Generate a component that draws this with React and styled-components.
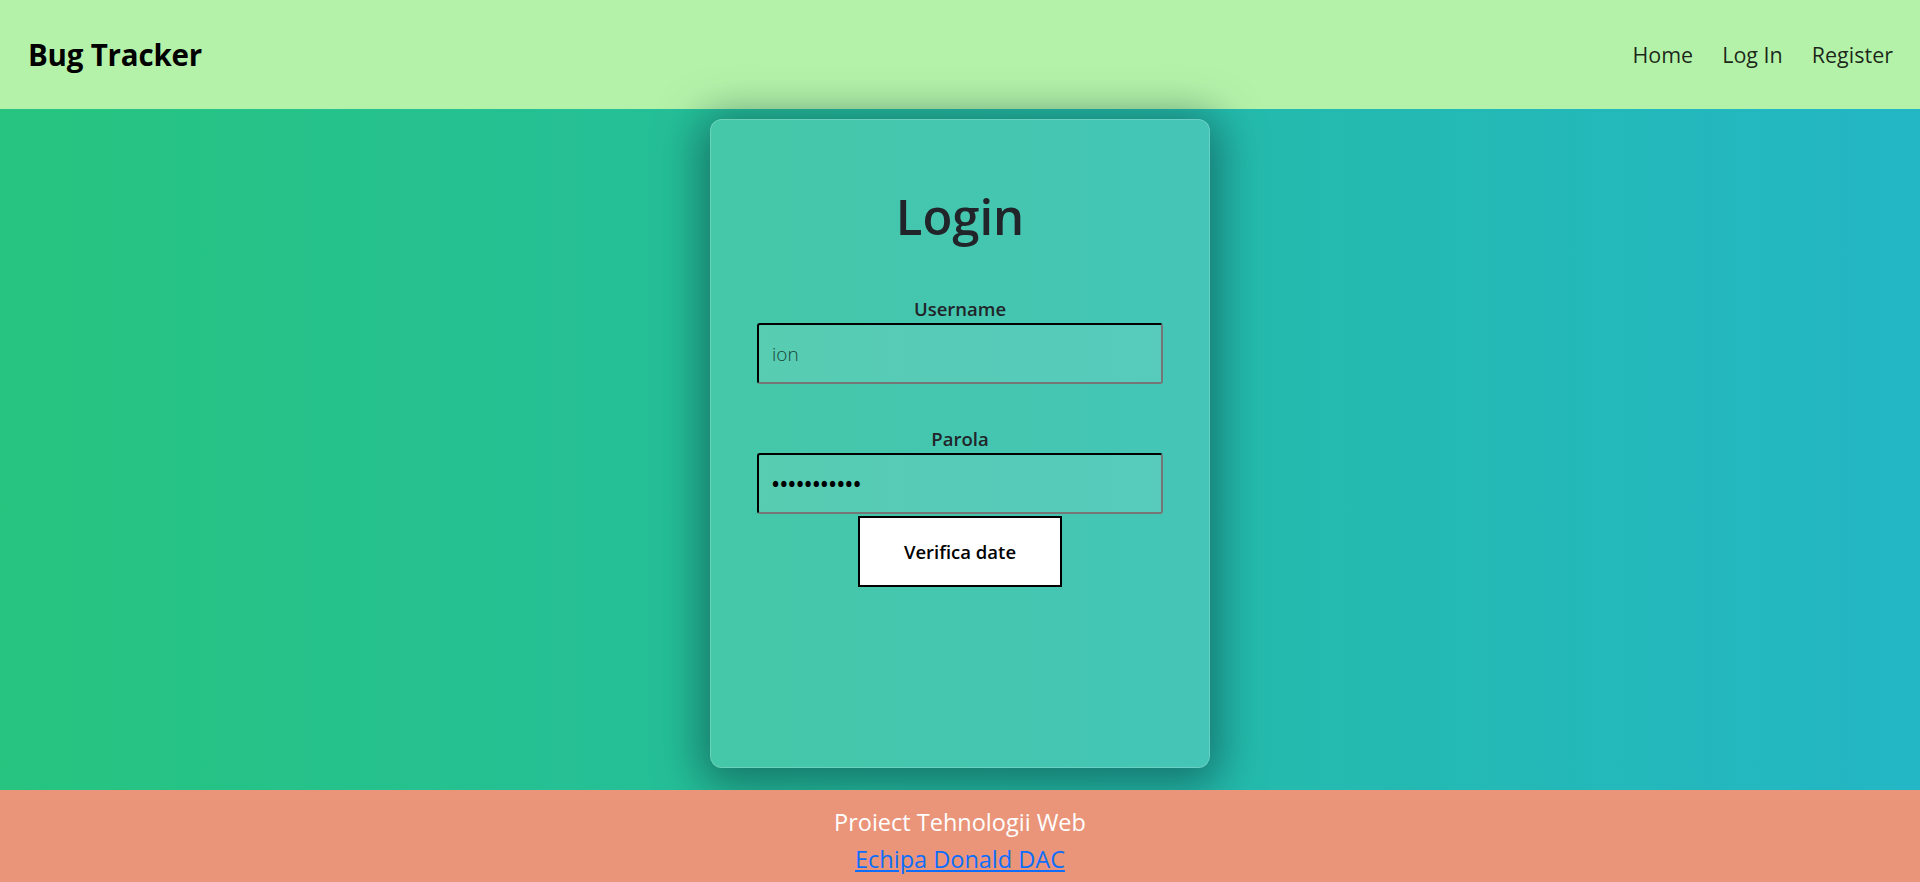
import React from "react";
import styled, { createGlobalStyle } from "styled-components";

const GlobalStyle = createGlobalStyle`
  html, body {
    margin: 0;
    padding: 0;
  }
  body {
    font-family: "Segoe UI", "Open Sans", "Noto Sans", sans-serif;
    color: #212529;
  }
  * {
    box-sizing: border-box;
  }
`;

const Page = styled.div`
  min-height: 100vh;
  display: flex;
  flex-direction: column;
`;

const Header = styled.header`
  height: 109px;
  flex-shrink: 0;
  background: #b5f2a9;
  display: flex;
  align-items: center;
  justify-content: space-between;
  padding: 0 27px 0 28px;
`;

const Brand = styled.a`
  font-size: 29.5px;
  font-weight: 700;
  color: #000;
  text-decoration: none;
  letter-spacing: -0.2px;
`;

const Nav = styled.nav`
  display: flex;
  align-items: center;
  gap: 29px;
`;

const NavLink = styled.a`
  font-size: 21.5px;
  color: rgba(0, 0, 0, 0.85);
  text-decoration: none;
  cursor: pointer;
`;

const Main = styled.main`
  flex: 1;
  display: flex;
  justify-content: center;
  padding: 10px 0 22px;
  background: linear-gradient(to right, #26c47f, #23b6c5);
`;

const Card = styled.section`
  width: 500px;
  height: 649px;
  padding-top: 66px;
  border-radius: 12px;
  border: 1px solid rgba(255, 255, 255, 0.2);
  background: rgba(255, 255, 255, 0.15);
  box-shadow: 0 8px 44px 10px rgba(12, 72, 72, 0.6);
  display: flex;
  flex-direction: column;
  align-items: center;
`;

const Title = styled.h1`
  margin: 0 0 51px;
  font-size: 49px;
  font-weight: 600;
  line-height: 60px;
  color: #212529;
`;

const Form = styled.form`
  display: flex;
  flex-direction: column;
  align-items: center;
  width: 406px;
`;

const Field = styled.div`
  display: flex;
  flex-direction: column;
  align-items: center;
  width: 100%;
  margin-bottom: ${(p) => p.$gap || 0}px;
`;

const Label = styled.label`
  font-size: 18.5px;
  font-weight: 600;
  line-height: 24px;
  margin-bottom: 2px;
  color: #212529;
`;

const Input = styled.input`
  width: 100%;
  height: 61px;
  padding: 0 13px;
  border: 2px inset #767676;
  border-top-color: #1e1e1e;
  border-left-color: #1e1e1e;
  border-radius: 3px;
  background: rgba(255, 255, 255, 0.1);
  font-family: inherit;
  font-size: 19px;
  font-weight: ${(p) => (p.type === "password" ? 700 : 300)};
  letter-spacing: ${(p) => (p.type === "password" ? "1px" : "0")};
  color: ${(p) => (p.type === "password" ? "#000" : "#173f37")};
  outline: none;
`;

const Button = styled.button`
  width: 204px;
  height: 71px;
  margin-top: 2px;
  background: #fff;
  border: 2px solid #000;
  font-family: inherit;
  font-size: 18.5px;
  font-weight: 600;
  color: #000;
  cursor: pointer;
`;

const Footer = styled.footer`
  height: 92px;
  flex-shrink: 0;
  background: #ea957a;
  padding-top: 14px;
  text-align: center;
  font-size: 23.5px;
  line-height: 37px;
  color: #fff;
`;

const FooterLine = styled.div``;

const FooterLink = styled.a`
  color: #0d6efd;
  text-decoration: underline;
`;

export default function App() {
  return (
    <>
      <GlobalStyle />
      <Page>
        <Header>
          <Brand href="#">Bug Tracker</Brand>
          <Nav>
            <NavLink href="#">Home</NavLink>
            <NavLink href="#">Log In</NavLink>
            <NavLink href="#">Register</NavLink>
          </Nav>
        </Header>
        <Main>
          <Card>
            <Title>Login</Title>
            <Form onSubmit={(e) => e.preventDefault()}>
              <Field $gap={43}>
                <Label htmlFor="username">Username</Label>
                <Input id="username" type="text" defaultValue="ion" />
              </Field>
              <Field>
                <Label htmlFor="parola">Parola</Label>
                <Input id="parola" type="password" defaultValue="parolamea12" />
              </Field>
              <Button type="submit">Verifica date</Button>
            </Form>
          </Card>
        </Main>
        <Footer>
          <FooterLine>Proiect Tehnologii Web</FooterLine>
          <FooterLine>
            <FooterLink href="#">Echipa Donald DAC</FooterLink>
          </FooterLine>
        </Footer>
      </Page>
    </>
  );
}
